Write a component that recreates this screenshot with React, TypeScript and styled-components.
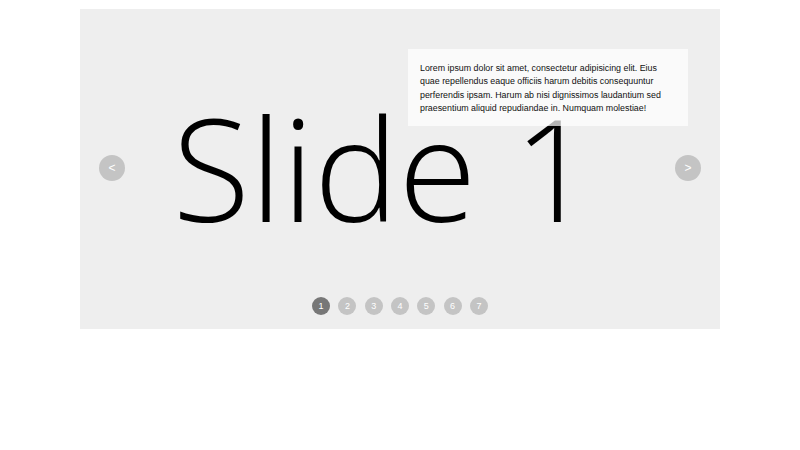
import React from 'react';
import styled, { createGlobalStyle } from 'styled-components';

const GlobalStyle = createGlobalStyle`
  body {
    margin: 8px 0;
    font-family: "Liberation Sans", Arial, sans-serif;
    background: #fff;
  }
`

const Slider = styled.div`
  position: relative;
  width: 640px;
  height: 320px;
  margin: 1px auto 0;
  background-color: #eeeeee;
  overflow: hidden;
`
const Slide = styled.div`
  height: 100%;
  display: flex;
  align-items: center;
  justify-content: center;
  padding-right: 33px;
  box-sizing: border-box;
`
const Title = styled.div`
  font-family: "Open Sans", sans-serif;
  font-weight: 300;
  font-size: 142px;
  line-height: 1;
  color: #000;
  margin-top: -4px;
`
const Caption = styled.div`
  position: absolute;
  top: 40px;
  left: 328px;
  width: 256px;
  padding: 13px 12px 11px;
  background-color: rgba(255, 255, 255, 0.7);
  font-size: 8.85px;
  line-height: 13.3px;
  color: #111;
`
const Arrow = styled.button<{ side: 'left' | 'right' }>`
  position: absolute;
  top: 146px;
  ${p => p.side === 'left' ? 'left: 19px;' : 'right: 19px;'}
  width: 26px;
  height: 26px;
  border: none;
  border-radius: 50%;
  background-color: #c4c4c4;
  color: #fff;
  font-family: "Liberation Sans", Arial, sans-serif;
  font-size: 12px;
  padding: 0;
  display: flex;
  align-items: center;
  justify-content: center;
  cursor: pointer;
`
const Dots = styled.div`
  position: absolute;
  left: 0;
  right: 0;
  bottom: 14px;
  display: flex;
  justify-content: center;
  gap: 8.3px;
`
const Dot = styled.span<{ active?: boolean }>`
  width: 18px;
  height: 18px;
  border-radius: 50%;
  background-color: ${p => p.active ? '#777777' : '#c4c4c4'};
  color: #fff;
  font-size: 9px;
  display: flex;
  align-items: center;
  justify-content: center;
`

const pages = [1, 2, 3, 4, 5, 6, 7]

export default function App() {
    return (
        <>
            <GlobalStyle />
            <Slider>
                <Slide>
                    <Title>Slide 1</Title>
                </Slide>
                <Caption>
                    Lorem ipsum dolor sit amet, consectetur adipisicing elit. Eius quae repellendus eaque officiis harum debitis consequuntur perferendis ipsam. Harum ab nisi dignissimos laudantium sed praesentium aliquid repudiandae in. Numquam molestiae!
                </Caption>
                <Arrow side="left">&lt;</Arrow>
                <Arrow side="right">&gt;</Arrow>
                <Dots>
                    {pages.map(n => <Dot key={n} active={n === 1}>{n}</Dot>)}
                </Dots>
            </Slider>
        </>
    );
}
